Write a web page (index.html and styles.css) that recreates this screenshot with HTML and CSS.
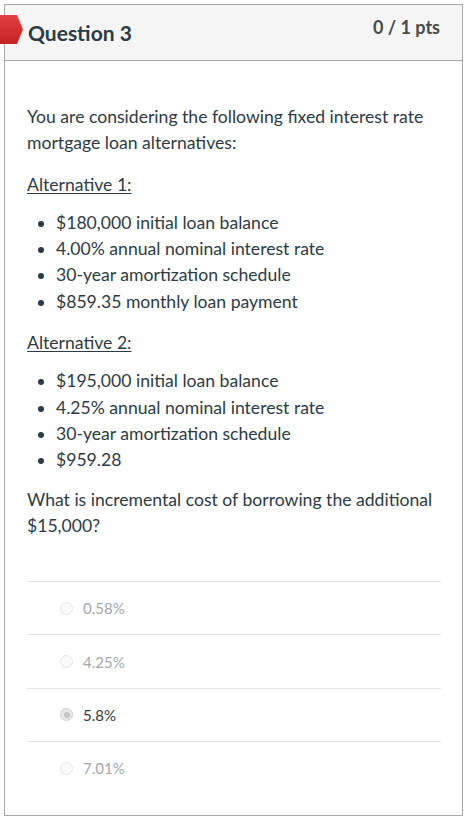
FILE: index.html
```html
<!DOCTYPE html>
<html>
<head>
<meta charset="utf-8">
<link rel="stylesheet" href="styles.css">
</head>
<body>
<div class="question">
  <div class="marker"></div>
  <div class="header">
    <span class="title">Question 3</span>
    <span class="pts">0 / 1 pts</span>
  </div>
  <div class="content">
    <div class="text">
      <p class="intro">You are considering the following fixed interest rate mortgage loan alternatives:</p>
      <p class="alt">Alternative 1:</p>
      <ul>
        <li>$180,000 initial loan balance</li>
        <li>4.00% annual nominal interest rate</li>
        <li>30-year amortization schedule</li>
        <li>$859.35 monthly loan payment</li>
      </ul>
      <p class="alt">Alternative 2:</p>
      <ul>
        <li>$195,000 initial loan balance</li>
        <li>4.25% annual nominal interest rate</li>
        <li>30-year amortization schedule</li>
        <li>$959.28</li>
      </ul>
      <p class="ask">What is incremental cost of borrowing the additional $15,000?</p>
    </div>
    <div class="answers">
      <div class="answer"><span class="radio"></span><span class="label">0.58%</span></div>
      <div class="answer"><span class="radio"></span><span class="label">4.25%</span></div>
      <div class="answer selected"><span class="radio"></span><span class="label">5.8%</span></div>
      <div class="answer"><span class="radio"></span><span class="label">7.01%</span></div>
    </div>
  </div>
</div>
</body>
</html>
```
FILE: styles.css
```css
html, body {
  margin: 0;
  padding: 0;
  background: #fff;
}
body {
  padding: 4px 6px 0 4px;
  font-family: Lato, "Open Sans", sans-serif;
  color: #2d3b45;
}
.question {
  position: relative;
  border: 1px solid #a9a9a9;
  height: 812px;
  box-sizing: border-box;
}
.marker {
  position: absolute;
  left: -5px;
  top: 10px;
  width: 23px;
  height: 29px;
  background: linear-gradient(#e04040, #c42424);
  clip-path: polygon(0 0, 17px 0, 100% 50%, 17px 100%, 0 100%);
}
.header {
  display: flex;
  justify-content: space-between;
  align-items: flex-start;
  background: #f5f5f5;
  border-bottom: 1px solid #a9a9a9;
  height: 55px;
  padding: 0 22px 0 23px;
}
.title {
  font-weight: 700;
  font-size: 21px;
  margin-top: 15px;
  color: #2d3b45;
}
.pts {
  font-weight: 700;
  font-size: 18px;
  margin-top: 11px;
  color: #4a4a4a;
}
.content {
  padding: 43px 21px 0 22px;
}
.text {
  font-size: 17.6px;
  line-height: 26.3px;
}
.text p {
  margin: 0;
}
.alt {
  text-decoration: underline;
  text-underline-offset: 2px;
  margin-top: 15px !important;
}
ul {
  margin: 12px 0 15px 0;
  padding-left: 29px;
}
.ask {
  margin-top: -2px !important;
}
.answers {
  margin-top: 42px;
}
.answer {
  display: flex;
  align-items: center;
  height: 53.3px;
  border-top: 1px solid #e6e6e6;
  padding-left: 33px;
  box-sizing: border-box;
  font-size: 15px;
  color: #a3a7ab;
}
.answer.selected {
  color: #2d3b45;
}
.radio {
  width: 13px;
  height: 13px;
  border-radius: 50%;
  border: 1px solid #e3e3e3;
  background: #fafafa;
  box-sizing: border-box;
  margin-right: 10px;
  position: relative;
}
.selected .radio {
  border-color: #cfcfcf;
  background: #e8e8e8;
}
.selected .radio::after {
  content: "";
  position: absolute;
  left: 2.5px;
  top: 2.5px;
  width: 6px;
  height: 6px;
  border-radius: 50%;
  background: #c4c4c4;
}
```
